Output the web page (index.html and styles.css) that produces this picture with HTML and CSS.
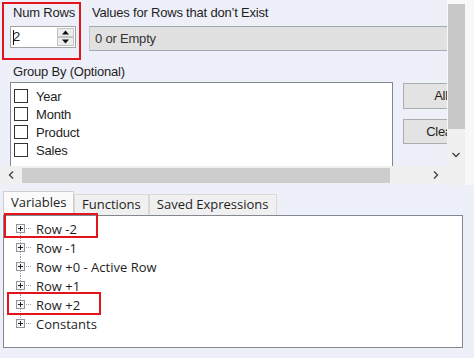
FILE: index.html
```html
<!DOCTYPE html>
<html>
<head>
<meta charset="utf-8">
<link rel="stylesheet" href="styles.css">
</head>
<body>
<div class="top">
  <div class="main">
    <div class="row1">
      <div class="numrows">
        <div class="lbl">Num Rows</div>
        <div class="spin">
          <div class="spinval"><span class="caret"></span>2</div>
          <div class="spinbtns">
            <div class="sbtn"><svg width="9" height="5" viewBox="0 0 9 5"><path d="M4.5 0.5L8 4.5H1z" fill="#111"/></svg></div>
            <div class="sbtn"><svg width="9" height="5" viewBox="0 0 9 5"><path d="M1 0.5H8L4.5 4.5z" fill="#111"/></svg></div>
          </div>
        </div>
      </div>
      <div class="values">
        <div class="lbl">Values for Rows that don’t Exist</div>
        <div class="combo">0 or Empty</div>
      </div>
    </div>
    <div class="lbl gb">Group By (Optional)</div>
    <div class="row2">
      <div class="listbox">
        <div class="item"><span class="cb"></span>Year</div>
        <div class="item"><span class="cb"></span>Month</div>
        <div class="item"><span class="cb"></span>Product</div>
        <div class="item"><span class="cb"></span>Sales</div>
      </div>
      <div class="btns">
        <div class="btn b1">All</div>
        <div class="btn b2">Clear</div>
      </div>
    </div>
    <div class="hscroll">
      <svg class="harrow" width="6" height="8" viewBox="0 0 6 8"><path d="M5 0.5L1.5 4L5 7.5" fill="none" stroke="#444" stroke-width="1.4"/></svg>
      <div class="hthumb"></div>
      <svg class="harrow" width="6" height="8" viewBox="0 0 6 8"><path d="M1 0.5L4.5 4L1 7.5" fill="none" stroke="#444" stroke-width="1.4"/></svg>
    </div>
  </div>
  <div class="vscroll">
    <div class="vthumb"></div>
    <div class="vtrack">
      <svg width="8" height="6" viewBox="0 0 8 6"><path d="M0.5 1L4 4.5L7.5 1" fill="none" stroke="#444" stroke-width="1.4"/></svg>
    </div>
    <div class="vcorner"></div>
  </div>
  <div class="edge"></div>
</div>
<div class="bottom">
  <div class="tabs">
    <div class="tab sel">Variables</div>
    <div class="tab">Functions</div>
    <div class="tab">Saved Expressions</div>
  </div>
  <div class="panel">
    <div class="node first"><svg class="exp" width="9" height="9" viewBox="0 0 9 9"><rect x="0.5" y="0.5" width="8" height="8" fill="#f6f6f6" stroke="#8e94a0"/><path d="M2 4.5h5M4.5 2v5" stroke="#222"/></svg><span class="dash"></span><span class="txt">Row -2</span></div>
    <div class="node"><svg class="exp" width="9" height="9" viewBox="0 0 9 9"><rect x="0.5" y="0.5" width="8" height="8" fill="#f6f6f6" stroke="#8e94a0"/><path d="M2 4.5h5M4.5 2v5" stroke="#222"/></svg><span class="dash"></span><span class="txt">Row -1</span></div>
    <div class="node"><svg class="exp" width="9" height="9" viewBox="0 0 9 9"><rect x="0.5" y="0.5" width="8" height="8" fill="#f6f6f6" stroke="#8e94a0"/><path d="M2 4.5h5M4.5 2v5" stroke="#222"/></svg><span class="dash"></span><span class="txt">Row +0 - Active Row</span></div>
    <div class="node"><svg class="exp" width="9" height="9" viewBox="0 0 9 9"><rect x="0.5" y="0.5" width="8" height="8" fill="#f6f6f6" stroke="#8e94a0"/><path d="M2 4.5h5M4.5 2v5" stroke="#222"/></svg><span class="dash"></span><span class="txt">Row +1</span></div>
    <div class="node"><svg class="exp" width="9" height="9" viewBox="0 0 9 9"><rect x="0.5" y="0.5" width="8" height="8" fill="#f6f6f6" stroke="#8e94a0"/><path d="M2 4.5h5M4.5 2v5" stroke="#222"/></svg><span class="dash"></span><span class="txt">Row +2</span></div>
    <div class="node last"><svg class="exp" width="9" height="9" viewBox="0 0 9 9"><rect x="0.5" y="0.5" width="8" height="8" fill="#f6f6f6" stroke="#8e94a0"/><path d="M2 4.5h5M4.5 2v5" stroke="#222"/></svg><span class="dash"></span><span class="txt">Constants</span></div>
  </div>
</div>
<div class="hl hl1"></div>
<div class="hl hl2"></div>
<div class="hl hl3"></div>
</body>
</html>
```
FILE: styles.css
```css
* { box-sizing: border-box; }
html, body { margin: 0; padding: 0; }
body {
  width: 474px;
  height: 358px;
  overflow: hidden;
  position: relative;
  background: #eef0f9;
  font-family: "Liberation Sans", Arial, sans-serif;
  font-size: 13px;
  color: #1e1e1e;
}
.top { display: flex; height: 185px; }
.main {
  width: 447px;
  flex: none;
  overflow: hidden;
  padding: 5px 0 0 10px;
  display: flex;
  flex-direction: column;
}
.row1 { display: flex; }
.numrows { width: 66px; flex: none; }
.lbl {
  height: 15px;
  line-height: 15px;
  letter-spacing: -0.2px;
  padding-left: 3px;
  white-space: nowrap;
}
.numrows .lbl { margin-bottom: 6px; }
.values .lbl { margin-bottom: 6px; }
.spin {
  height: 22px;
  background: #fff;
  border: 1px solid #a3a3a3;
  display: flex;
}
.spinval {
  flex: 1;
  padding-left: 2px;
  line-height: 20px;
  display: flex;
  align-items: center;
}
.caret { width: 1px; height: 15px; background: #111; margin-right: -1px; }
.spinbtns {
  width: 18px;
  display: flex;
  flex-direction: column;
  padding: 1px 1px 1px 0;
  gap: 0;
}
.sbtn {
  flex: 1;
  background: #ededed;
  border: 1px solid #c4c4c4;
  display: flex;
  align-items: center;
  justify-content: center;
}
.values { flex: 1; margin-left: 13px; }
.combo {
  height: 25px;
  background: #e1e1e1;
  border-top: 1px solid #a6a8b0;
  border-bottom: 1px solid #a6a8b0;
  border-left: 1px solid #c8c8cc;
  line-height: 23px;
  padding-left: 5px;
  color: #333;
  letter-spacing: -0.2px;
}
.gb { margin-top: 13px; }
.row2 { display: flex; margin-top: 3px; height: 84px; }
.listbox {
  width: 383px;
  flex: none;
  height: 84px;
  background: #fff;
  border: 1px solid #828790;
  border-bottom: none;
  padding: 4px 0 0 3px;
}
.item {
  height: 18px;
  display: flex;
  align-items: center;
  letter-spacing: -0.2px;
}
.cb {
  width: 14px;
  height: 14px;
  border: 1px solid #333;
  background: #fff;
  margin-right: 8px;
  flex: none;
}
.btns {
  display: flex;
  flex-direction: column;
  margin-left: 10px;
  padding-top: 1px;
  gap: 10px;
}
.btn {
  width: 76px;
  background: #e3e3e3;
  border: 1px solid #adadad;
  text-align: center;
  letter-spacing: -0.3px;
}
.b1 { height: 26px; line-height: 24px; }
.b2 { height: 25px; line-height: 23px; }
.hscroll {
  margin-left: -10px;
  height: 18px;
  background: #f0f0f0;
  display: flex;
  align-items: center;
  padding: 0 8px;
}
.hthumb {
  width: 368px;
  height: 15px;
  background: #cdcdcd;
  margin: 0 auto 0 8px;
}
.vscroll {
  width: 18px;
  flex: none;
  display: flex;
  flex-direction: column;
  padding-top: 4px;
  background: #f8f8fa;
}
.vthumb {
  height: 125px;
  margin-left: 1px;
  background: #c8c8c8;
}
.vtrack {
  height: 37px;
  background: #f0f0f0;
  display: flex;
  align-items: flex-end;
  justify-content: center;
  padding-bottom: 8px;
}
.vcorner { flex: 1; background: #f0f0f0; }
.edge { flex: 1; background: #f8f8fa; }
.bottom { padding: 6px 0 0 3px; }
.tabs {
  display: flex;
  align-items: flex-end;
  height: 24px;
  font-family: "Open Sans", "Noto Sans", sans-serif;
  font-size: 13px;
  color: #1e1e1e;
}
.tab {
  height: 21px;
  line-height: 19px;
  padding: 0 7px;
  background: #f0f0f0;
  border: 1px solid #d9d9d9;
  border-bottom: none;
  white-space: nowrap;
}
.tab.sel {
  height: 24px;
  line-height: 20px;
  width: 71px;
  background: #fbfbfb;
  border-color: #d0d0d0;
}
.tab + .tab { margin-left: 0; }
.panel {
  width: 460px;
  height: 133px;
  background: #fff;
  border: 1px solid #828790;
  padding-top: 3px;
  font-family: "Open Sans", "Noto Sans", sans-serif;
  font-size: 13px;
  color: #1e1e1e;
}
.node {
  position: relative;
  height: 19px;
  display: flex;
  align-items: center;
  padding-left: 12px;
}
.node::before {
  content: "";
  position: absolute;
  left: 16px;
  top: 0;
  bottom: 0;
  border-left: 1px dotted #a0a0a0;
}
.node.first::before { top: 50%; }
.node.last::before { bottom: 50%; }
.exp { position: relative; flex: none; display: block; }
.dash {
  width: 5px;
  border-top: 1px dotted #a0a0a0;
  margin: 0 5px 0 1px;
}
.txt { white-space: nowrap; }
.hl {
  position: absolute;
  border: 2px solid #e3141c;
}
.hl1 { left: 2px; top: 2px; width: 79px; height: 58px; }
.hl2 { left: 4px; top: 213px; width: 94px; height: 25px; }
.hl3 { left: 7px; top: 292px; width: 94px; height: 23px; }
```
